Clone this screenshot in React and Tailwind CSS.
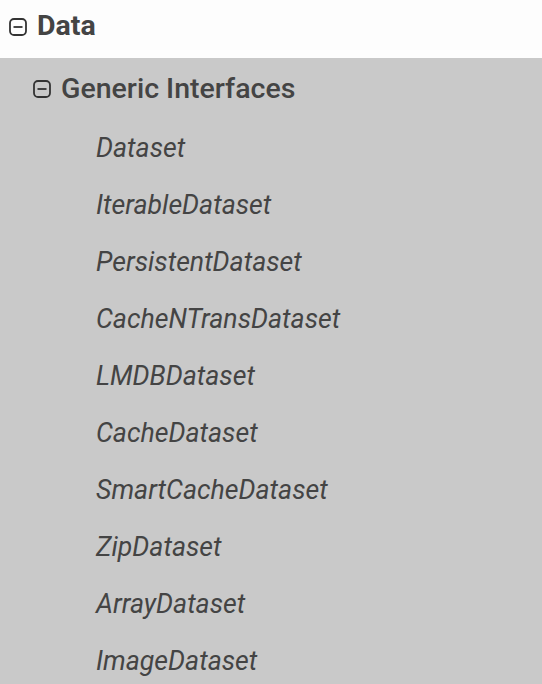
import React from "react";

const items = [
  "Dataset",
  "IterableDataset",
  "PersistentDataset",
  "CacheNTransDataset",
  "LMDBDataset",
  "CacheDataset",
  "SmartCacheDataset",
  "ZipDataset",
  "ArrayDataset",
  "ImageDataset",
];

const MinusBox = ({ className }) => (
  <svg viewBox="0 0 18 18" className={className} fill="none">
    <rect x="1" y="1" width="16" height="16" rx="4" stroke="#333" strokeWidth="1.8" />
    <line x1="4.5" y1="9" x2="13.5" y2="9" stroke="#333" strokeWidth="1.8" />
  </svg>
);

export default function App() {
  return (
    <div className="w-[542px] h-[684px] overflow-hidden bg-[#c9c9c9] text-[#444] font-['Roboto',sans-serif]">
      <div className="h-[58px] bg-[#fdfdfd] flex items-center pl-[9px] pb-[5px] gap-[10px]">
        <MinusBox className="w-[18px] h-[18px]" />
        <span className="text-[28.5px] font-bold leading-none">Data</span>
      </div>
      <div className="h-[60px] flex items-center pl-[33px] pt-[2px] gap-[10px]">
        <MinusBox className="w-[18px] h-[18px]" />
        <span className="text-[28.5px] font-medium leading-none">Generic Interfaces</span>
      </div>
      <ul className="pl-[96px] pt-[2px]">
        {items.map((name) => (
          <li key={name} className="h-[57px] flex items-center text-[26.7px] italic leading-none">
            {name}
          </li>
        ))}
      </ul>
    </div>
  );
}
